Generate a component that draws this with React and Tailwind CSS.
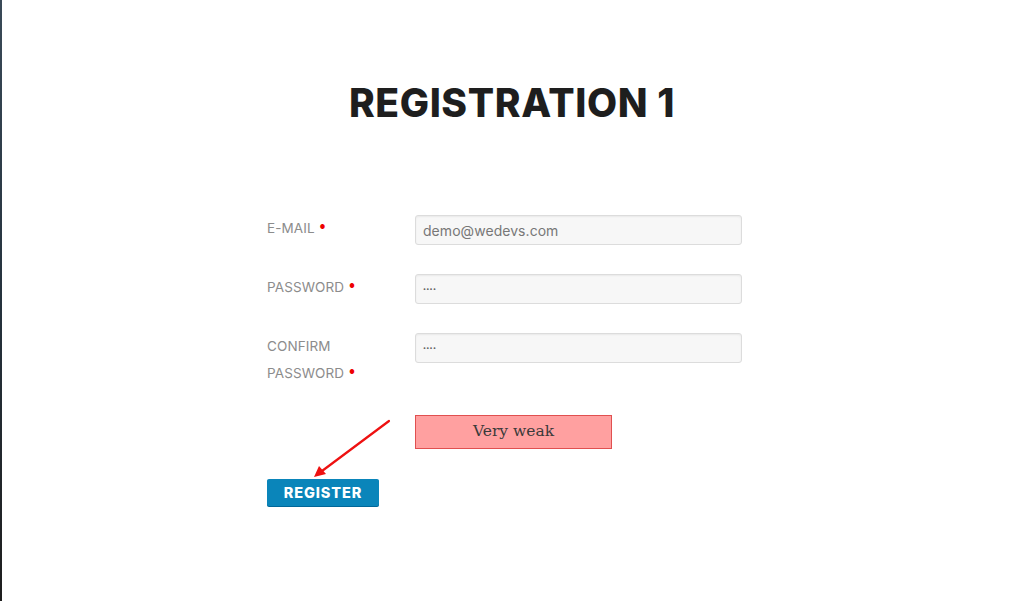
import React from "react";

function Label({ lines }) {
  return (
    <div
      className="w-[148px] shrink-0 text-[13.5px] leading-[27px] text-[#8c8c8c] uppercase tracking-[0.1px]"
      style={{ fontFamily: 'Inter, "Liberation Sans", sans-serif' }}
    >
      {lines.map((l, i) => (
        <div key={i} className="h-[27px]">
          {l}
          {i === lines.length - 1 && <span className="text-[#e00] ml-[5px] text-[6px] leading-none relative top-[-4px]">●</span>}
        </div>
      ))}
    </div>
  );
}

function Input({ children, dots }) {
  return (
    <div className="w-[327px] h-[30px] bg-[#f7f7f7] border border-[#dcdcdc] rounded-[3px] shadow-[inset_0_1px_2px_rgba(0,0,0,0.06)] flex items-center px-[7px]">
      {dots ? (
        <span className="text-[8px] tracking-[0.3px] text-[#666] leading-none">••••</span>
      ) : (
        <span className="text-[14px] text-[#777] tracking-[0.05px]" style={{ fontFamily: 'Inter, "Liberation Sans", sans-serif' }}>{children}</span>
      )}
    </div>
  );
}

export default function App() {
  return (
    <div className="relative w-[1024px] h-[601px] bg-white overflow-hidden flex" style={{ fontFamily: '"Open Sans", "Liberation Sans", sans-serif' }}>
      <div className="w-[2px] h-full bg-gradient-to-b from-[#3a4a58] via-[#25323d] to-[#1e1e1e] shrink-0" />
      <div className="flex-1 flex flex-col">
        <h1
          className="mt-[80px] text-center text-[39px] leading-[46px] font-extrabold text-[#1e1e1e] tracking-[0.6px] pr-[2px]"
          style={{ fontFamily: 'Inter, "Liberation Sans", sans-serif' }}
        >
          REGISTRATION 1
        </h1>
        <div className="ml-[265px] mt-[89px] flex flex-col">
          <div className="flex">
            <Label lines={["E-Mail"]} />
            <Input>demo@wedevs.com</Input>
          </div>
          <div className="flex mt-[29px]">
            <Label lines={["Password"]} />
            <Input dots />
          </div>
          <div className="flex mt-[29px]">
            <Label lines={["Confirm", "Password"]} />
            <Input dots />
          </div>
          <div className="flex mt-[28px]">
            <div className="w-[148px] shrink-0" />
            <div
              className="w-[197px] h-[34px] bg-[#ffa0a0] border border-[#e05050] flex items-center justify-center text-[15.5px] text-[#3a3a3a]"
              style={{ fontFamily: '"DejaVu Serif", "Liberation Serif", serif' }}
            >
              Very weak
            </div>
          </div>
          <div className="mt-[30px]">
            <button
              className="w-[112px] h-[27px] bg-[#0a85ba] rounded-[2px] shadow-[0_1px_0_#006799] text-white text-[14.5px] font-extrabold tracking-[0.9px] flex items-center justify-center"
              style={{ fontFamily: 'Inter, "Liberation Sans", sans-serif' }}
            >
              REGISTER
            </button>
          </div>
        </div>
      </div>
      <svg className="absolute left-0 top-0 pointer-events-none" width="1024" height="601">
        <line x1="389" y1="421" x2="322" y2="471" stroke="#ee1111" strokeWidth="2.2" strokeLinecap="round" />
        <polygon points="314,477 319,466 326,474" fill="#ee1111" />
      </svg>
    </div>
  );
}
